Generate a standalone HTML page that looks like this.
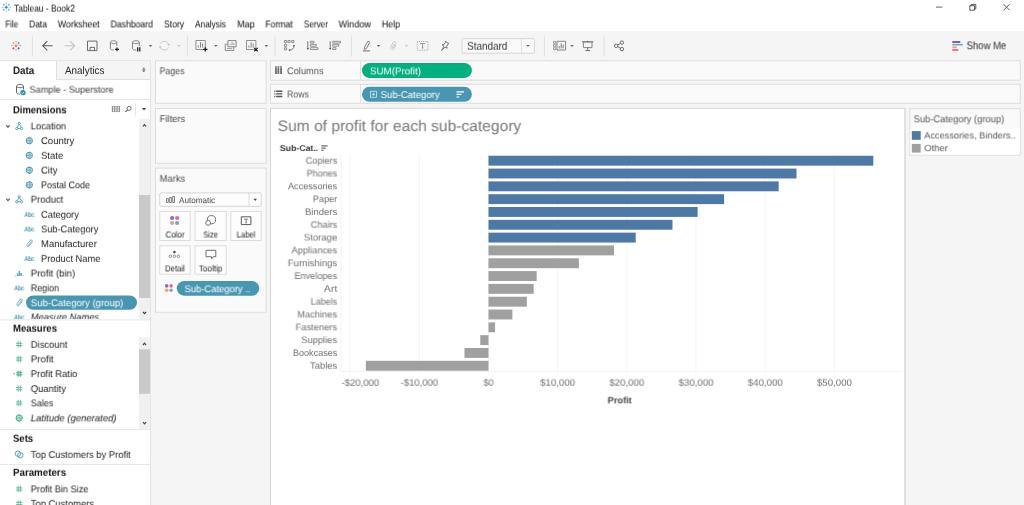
<!DOCTYPE html>
<html lang="en">
<head>
<meta charset="utf-8">
<title>Tableau - Book2</title>
<style>
html,body{margin:0;padding:0;}
body{width:1024px;height:505px;overflow:hidden;background:#fff;font-family:"Liberation Sans", sans-serif;position:relative;}
#app{position:absolute;left:0;top:0;width:1024px;height:505px;overflow:hidden;background:#fff;}
#shapes{position:absolute;left:0;top:0;display:block;}
#text{position:absolute;left:0;top:0;width:1024px;height:505px;overflow:hidden;}
.r{position:absolute;box-sizing:border-box;display:block;}
.t{position:absolute;white-space:nowrap;display:block;text-rendering:geometricPrecision;}
</style>
</head>
<body>
<div id="app">
<svg id="shapes" width="1024" height="505" viewBox="0 0 1024 505">
<rect x="0" y="0" width="1024" height="31" fill="#fff"/>
<g transform="translate(6.3 7.3)"><path d="M0 -2.18L0.7 -0.7L2.18 0L0.7 0.7L0 2.18L-0.7 0.7L-2.18 0L-0.7 -0.7Z" fill="#3f86c9" opacity="1"/><path d="M-2.47 -3.99L-1.98 -2.96L-0.95 -2.47L-1.98 -1.98L-2.47 -0.95L-2.96 -1.98L-3.99 -2.47L-2.96 -2.96Z" fill="#7db3e2" opacity="1"/><path d="M2.47 -3.99L2.96 -2.96L3.99 -2.47L2.96 -1.98L2.47 -0.95L1.98 -1.98L0.95 -2.47L1.98 -2.96Z" fill="#7db3e2" opacity="1"/><path d="M-2.47 0.95L-1.98 1.98L-0.95 2.47L-1.98 2.96L-2.47 3.99L-2.96 2.96L-3.99 2.47L-2.96 1.98Z" fill="#7db3e2" opacity="1"/><path d="M2.47 0.95L2.96 1.98L3.99 2.47L2.96 2.96L2.47 3.99L1.98 2.96L0.95 2.47L1.98 1.98Z" fill="#7db3e2" opacity="1"/><path d="M0 -5.04L0.35 -4.29L1.09 -3.94L0.35 -3.59L0 -2.85L-0.35 -3.59L-1.09 -3.94L-0.35 -4.29Z" fill="#8fc0ea" opacity="1"/><path d="M0 2.85L0.35 3.59L1.09 3.94L0.35 4.29L0 5.04L-0.35 4.29L-1.09 3.94L-0.35 3.59Z" fill="#8fc0ea" opacity="1"/><path d="M-3.94 -1.09L-3.59 -0.35L-2.85 0L-3.59 0.35L-3.94 1.09L-4.29 0.35L-5.04 0L-4.29 -0.35Z" fill="#8fc0ea" opacity="1"/><path d="M3.94 -1.09L4.29 -0.35L5.04 0L4.29 0.35L3.94 1.09L3.59 0.35L2.85 0L3.59 -0.35Z" fill="#8fc0ea" opacity="1"/></g>
<g transform="translate(936 4)"><path d="M0 3.1h6.4" stroke="#555" stroke-width=".9" fill="none"/></g>
<g transform="translate(969.3 4)"><path d="M0.5 1.7h4.7v4.5h-4.7zM1.8 1.7v-1.3h4.7v4.4h-1.3" stroke="#444" stroke-width=".9" fill="none"/></g>
<g transform="translate(1003.2 3.8)"><path d="M0.3 0.3l6.2 6.2M6.5 0.3l-6.2 6.2" stroke="#444" stroke-width=".85" fill="none"/></g>
<rect x="0" y="31" width="1024" height="30" fill="#f5f5f5"/>
<rect x="31.9" y="35.4" width="1" height="21.2" fill="#e0e0e0"/>
<rect x="186.9" y="35.4" width="1" height="21.2" fill="#e0e0e0"/>
<rect x="274.4" y="35.4" width="1" height="21.2" fill="#e0e0e0"/>
<rect x="350.9" y="35.4" width="1" height="21.2" fill="#e0e0e0"/>
<rect x="543.9" y="35.4" width="1" height="21.2" fill="#e0e0e0"/>
<rect x="603.6" y="35.4" width="1" height="21.2" fill="#e0e0e0"/>
<g transform="translate(16 45.7)"><path d="M0 -2.3L0.74 -0.74L2.3 0L0.74 0.74L0 2.3L-0.74 0.74L-2.3 0L-0.74 -0.74Z" fill="#f08d3c" opacity="1"/><path d="M-2.6 -4.2L-2.09 -3.11L-1 -2.6L-2.09 -2.09L-2.6 -1L-3.11 -2.09L-4.2 -2.6L-3.11 -3.11Z" fill="#f3a64a" opacity="1"/><path d="M2.6 -4.2L3.11 -3.11L4.2 -2.6L3.11 -2.09L2.6 -1L2.09 -2.09L1 -2.6L2.09 -3.11Z" fill="#5a9aa9" opacity="1"/><path d="M-2.6 1L-2.09 2.09L-1 2.6L-2.09 3.11L-2.6 4.2L-3.11 3.11L-4.2 2.6L-3.11 2.09Z" fill="#d8465d" opacity="1"/><path d="M2.6 1L3.11 2.09L4.2 2.6L3.11 3.11L2.6 4.2L2.09 3.11L1 2.6L2.09 2.09Z" fill="#3d6fb1" opacity="1"/><path d="M0 -5.3L0.37 -4.52L1.15 -4.15L0.37 -3.78L0 -3L-0.37 -3.78L-1.15 -4.15L-0.37 -4.52Z" fill="#86b3b8" opacity="1"/><path d="M0 3L0.37 3.78L1.15 4.15L0.37 4.52L0 5.3L-0.37 4.52L-1.15 4.15L-0.37 3.78Z" fill="#a0a6cf" opacity="1"/><path d="M-4.15 -1.15L-3.78 -0.37L-3 0L-3.78 0.37L-4.15 1.15L-4.52 0.37L-5.3 0L-4.52 -0.37Z" fill="#90b7be" opacity="1"/><path d="M4.15 -1.15L4.52 -0.37L5.3 0L4.52 0.37L4.15 1.15L3.78 0.37L3 0L3.78 -0.37Z" fill="#8c86be" opacity="1"/></g>
<g transform="translate(42 40.8)"><path d="M0.8 5h9.8M5.3 0.4L0.7 5l4.6 4.6" stroke="#5c5c5c" stroke-width="1.05" fill="none"/></g>
<g transform="translate(64.4 40.8)"><path d="M0.3 5h9.8M5.7 0.4L10.3 5 5.7 9.6" stroke="#c2c2c2" stroke-width="1.05" fill="none"/></g>
<g transform="translate(87 40.6)"><path d="M0.5 0.5h9.5v9.5h-9.5zM3 10v-3.2h4.5V10" stroke="#6b6b6b" stroke-width="1" fill="none"/></g>
<g transform="translate(109.9 40.2)"><path d="M0.5 2c0-2 6.4-2 6.4 0v3.6M0.5 2v6.2c0 1 1.6 1.6 3.4 1.6M0.5 2c0 1.9 6.4 1.9 6.4 0" stroke="#7a7a7a" stroke-width=".9" fill="none"/><path d="M7.1 7.2v3.9M5.15 9.15h3.9" stroke="#222" stroke-width="1.2" fill="none"/></g>
<g transform="translate(132 40.2)"><path d="M0.5 2c0-2 6.8-2 6.8 0v4M0.5 2v6.2c0 1 1.6 1.7 3.8 1.7M0.5 2c0 1.9 6.8 1.9 6.8 0" stroke="#7a7a7a" stroke-width=".9" fill="none"/><path d="M5.7 7v4.4M7.8 7v4.4" stroke="#1c1c1c" stroke-width="1.25" fill="none"/></g>
<g transform="translate(148.75 44.9)"><path d="M0 0h3.5l-1.75 2.1z" fill="#666"/></g>
<g transform="translate(159 40.5)"><path d="M9.9 4.2A4.7 4.7 0 0 0 1.2 3.3M0.9 6.2A4.7 4.7 0 0 0 9.6 7.1" stroke="#c6c6c6" stroke-width=".9" fill="none"/><path d="M10.6 3l-0.4 2.2-2-1zM0.2 7.4l0.4-2.2 2 1z" fill="#c0c0c0"/></g>
<g transform="translate(177.05 44.9)"><path d="M0 0h3.5l-1.75 2.1z" fill="#c8c8c8"/></g>
<g transform="translate(195.4 40)"><path d="M0.5 0.5h9.4v9h-9.4z" stroke="#8a8a8a" stroke-width=".95" fill="none" stroke-linejoin="round"/><path d="M2.9 7.6v-2.1M5.1 7.6v-5.4M7.2 7.6v-4.1" stroke="#7a7a7a" stroke-width=".9" fill="none"/><path d="M9.9 7.3v4.3M7.75 9.45h4.3" stroke="#1c1c1c" stroke-width="1.25" fill="none"/></g>
<g transform="translate(214.15 44.9)"><path d="M0 0h3.5l-1.75 2.1z" fill="#666"/></g>
<g transform="translate(224.6 40)"><path d="M0.6 4.2h2.3M0.6 4.2v6.3h8.6v-3.6" stroke="#8a8a8a" stroke-width=".95" fill="none"/><path d="M3.3 0.6h8.2v6.2h-8.2z" stroke="#7e7e7e" stroke-width=".95" fill="none"/><path d="M5.6 5.2v-1.4M7.4 5.2v-3.2M9.2 5.2v-2.3M2.2 8.6h5.4" stroke="#8a8a8a" stroke-width=".8" fill="none"/></g>
<g transform="translate(246 40)"><path d="M0.5 0.5h9.4v9h-9.4z" stroke="#8a8a8a" stroke-width=".95" fill="none" stroke-linejoin="round"/><path d="M2.9 7.6v-2.1M5.1 7.6v-5.4M7.2 7.6v-4.1" stroke="#7a7a7a" stroke-width=".9" fill="none"/><path d="M8.3 7.9l3.4 3.4M11.7 7.9l-3.4 3.4" stroke="#1c1c1c" stroke-width="1.25" fill="none"/></g>
<g transform="translate(264.65 44.9)"><path d="M0 0h3.5l-1.75 2.1z" fill="#666"/></g>
<g transform="translate(284 40)"><path d="M0.4 0.5h2.2v2.1h-2.2zM3.9 0.5h2.2v2.1h-2.2zM7.7 0.5h2.2v2.1h-2.2zM0.4 4.3h2.2v2.1h-2.2zM0.4 7.8h2.2v2.1h-2.2z" stroke="#7a7a7a" stroke-width=".8" fill="none"/><path d="M10 5.7C10 8.4 8.2 9.9 5.6 10.1" stroke="#6a6a6a" stroke-width=".9" fill="none"/><circle cx="10" cy="5.6" r=".85" fill="#5a5a5a"/><circle cx="5.5" cy="10.1" r=".85" fill="#5a5a5a"/></g>
<g transform="translate(306.5 40.5)"><path d="M1.3 0.7v8" stroke="#6a6a6a" stroke-width=".9" fill="none"/><path d="M0.1 7.5h2.4l-1.2 1.7z" fill="#555"/><path d="M3.9 0.8h3.5v1.7h-3.5zM3.9 3.8h5.8v1.9h-5.8zM3.9 7.2h7.6v1.8h-7.6z" stroke="#7a7a7a" stroke-width=".8" fill="none"/></g>
<g transform="translate(329 40.5)"><path d="M1.2 0.7v8" stroke="#6a6a6a" stroke-width=".9" fill="none"/><path d="M0 7.5h2.4l-1.2 1.7z" fill="#555"/><path d="M3.7 0.8h7.8v1.7h-7.8zM3.7 3.8h6.1v1.9h-6.1zM3.7 7.2h3.2v1.8h-3.2z" stroke="#7a7a7a" stroke-width=".8" fill="none"/></g>
<g transform="translate(362 40.5)"><path d="M6 0.6l1.8 1-3.5 6.6-2 0.6 0.2-2.1z" stroke="#727272" stroke-width=".9" fill="none" stroke-linejoin="round"/><path d="M0.8 10.4h7.2" stroke="#777" stroke-width="1.1" fill="none"/></g>
<g transform="translate(376.85 44.9)"><path d="M0 0h3.5l-1.75 2.1z" fill="#666"/></g>
<g transform="translate(389.6 40.6)"><g transform="rotate(27 4 5)"><path d="M5.9 3V7.6a1.9 1.9 0 0 1-3.8 0V2a1.35 1.35 0 0 1 2.7 0V7.2a0.55 0.55 0 0 1-1.1 0V3" stroke="#c6c6c6" stroke-width=".8" fill="none"/></g></g>
<g transform="translate(404.75 44.9)"><path d="M0 0h3.5l-1.75 2.1z" fill="#c8c8c8"/></g>
<g transform="translate(416.8 41)"><path d="M0.5 0.5h10.6v8.7h-10.6z" stroke="#9a9a9a" stroke-width=".9" stroke-dasharray=".9 .95" fill="none"/><path d="M3.6 2.5h4.4M5.8 2.5v4.5M4.9 7h1.8M3.6 2.5v.8M8 2.5v.8" stroke="#777" stroke-width=".7" fill="none"/></g>
<g transform="translate(440.6 40.5)"><path d="M4.6 0.7l3.7 2.5-1.2 0.5-1.1 2.6 0.6 1.4-2.1-1.1-3.5 3.5 2.3-4.3-1.8-1.4 1.7-0.2 1.8-2.3z" stroke="#666" stroke-width=".9" fill="none" stroke-linejoin="round"/></g>
<rect x="462.1" y="38.6" width="72.2" height="14.6" stroke="#d6d6d6" stroke-width="1" fill="#fafafa" rx="1"/>
<rect x="521.1" y="39" width="1" height="14" fill="#e0e0e0"/>
<g transform="translate(526.25 44.9)"><path d="M0 0h3.5l-1.75 2.1z" fill="#666"/></g>
<g transform="translate(553 40.8)"><path d="M0.5 0.6h2.3v1.9h-2.3zM0.5 3.7h2.3v1.9h-2.3zM0.5 6.9h2.3v1.9h-2.3z" stroke="#808080" stroke-width=".75" fill="none"/><path d="M4 0.5h8.6v8.7h-8.6z" stroke="#7a7a7a" stroke-width=".9" fill="none"/><path d="M6.2 7.6v-2.2M8.2 7.6v-5M10.2 7.6v-3.6" stroke="#6a6a6a" stroke-width=".9" fill="none"/></g>
<g transform="translate(570.25 44.9)"><path d="M0 0h3.5l-1.75 2.1z" fill="#666"/></g>
<g transform="translate(582 40.5)"><path d="M0.1 1.4h11.2" stroke="#555" stroke-width="1.1" fill="none"/><path d="M5.7 0.3v1" stroke="#555" stroke-width="1" fill="none"/><path d="M1.4 1.8v5.3h8.6v-5.3" stroke="#7a7a7a" stroke-width=".9" fill="none"/><path d="M5.7 7.1v2.9M3.4 10h4.6" stroke="#6a6a6a" stroke-width=".9" fill="none"/></g>
<g transform="translate(614 40.5)"><circle cx="7.9" cy="2.1" r="1.7" stroke="#606060" stroke-width=".9" fill="none"/><circle cx="2.2" cy="5.3" r="1.7" stroke="#606060" stroke-width=".9" fill="none"/><circle cx="7.9" cy="8.6" r="1.7" stroke="#606060" stroke-width=".9" fill="none"/><path d="M3.7 4.5l2.7-1.5M3.7 6.2l2.7 1.5" stroke="#606060" stroke-width=".9" fill="none"/></g>
<g transform="translate(952.3 41)"><path d="M0 1h8" stroke="#7b66a3" stroke-width="2"/><path d="M0 3.7h10.5" stroke="#6ea5d2" stroke-width="1.6"/><path d="M0 6.3h4.5" stroke="#f2a35e" stroke-width="1.8"/><path d="M0 9h6" stroke="#e8667e" stroke-width="1.8"/></g>
<rect x="150" y="61" width="874" height="444" fill="#f5f5f5"/>
<rect x="0" y="61" width="150" height="444" fill="#fff"/>
<rect x="0" y="60.2" width="150.5" height="1" fill="#e4e4e4"/>
<rect x="150" y="60.2" width="0.9" height="445" fill="#e2e2e2"/>
<rect x="56" y="61" width="94" height="19" fill="#f5f5f5"/>
<rect x="56" y="61" width="1" height="19" fill="#e0e0e0"/>
<rect x="56" y="79" width="94" height="1" fill="#e0e0e0"/>
<g transform="translate(142.1 67.6)"><path d="M1.7 0l1.7 1.9h-3.4zM1.7 4.6l1.7-1.9h-3.4z" fill="#666"/></g>
<g transform="translate(16 84)"><path d="M0.5 2.2c0-2.2 7-2.2 7 0v3.3M0.5 2.2v6.3c0 1 1.5 1.6 3.2 1.6M0.5 2.2c0 2 7 2 7 0" stroke="#666" stroke-width="1" fill="none"/><circle cx="7" cy="8.6" r="2.7" fill="#2e89b8"/><path d="M5.7 8.6l1 1 1.6-1.9" stroke="#fff" stroke-width=".8" fill="none"/></g>
<rect x="0" y="99" width="150" height="1" fill="#e6e6e6"/>
<g transform="translate(111.9 106)"><path d="M0.5 0v6M2.8 0v6M5.2 0v6M7.5 0v6" stroke="#7d7d7d" stroke-width=".9" fill="none"/><path d="M0 0.5h8M0 2.2h8M0 3.9h8M0 5.6h8" stroke="#8c8c8c" stroke-width=".6" fill="none"/></g>
<g transform="translate(125 105.8)"><circle cx="4.1" cy="2.6" r="2" stroke="#5c5c5c" stroke-width=".9" fill="none"/><path d="M2.6 4.1L0.4 6.1" stroke="#555" stroke-width="1.1" fill="none"/></g>
<rect x="135.2" y="103.2" width="0.8" height="12.3" fill="#dedede"/>
<g transform="translate(141.9 108.1)"><path d="M0 0h4.2l-2.1 2.5z" fill="#4a4a4a"/></g>
<g transform="translate(5.9 125.1)"><path d="M0.3 0.3l1.75 1.85 1.75-1.85" stroke="#5a5a5a" stroke-width="1.15" fill="none"/></g>
<g transform="translate(15.3 122.1)"><g stroke="#4c97b4" stroke-width=".85" fill="none"><rect x="2.8" y="0.4" width="2.2" height="1.9" rx=".5"/><circle cx="1.5" cy="6.4" r="1.15"/><circle cx="6.3" cy="6.4" r="1.15"/><path d="M3.5 2.4L1.9 5.3M4.3 2.4L5.9 5.3M2.7 6.4h2.4"/></g></g>
<g transform="translate(25.6 137)"><g stroke="#4c97b4" fill="none"><circle cx="3.7" cy="3.7" r="3.15" stroke-width="1"/><path d="M0.5 3.7h6.4M3.7 0.5v6.4" stroke-width=".7"/><ellipse cx="3.7" cy="3.7" rx="1.6" ry="3.1" stroke-width=".6"/></g></g>
<g transform="translate(25.6 151.7)"><g stroke="#4c97b4" fill="none"><circle cx="3.7" cy="3.7" r="3.15" stroke-width="1"/><path d="M0.5 3.7h6.4M3.7 0.5v6.4" stroke-width=".7"/><ellipse cx="3.7" cy="3.7" rx="1.6" ry="3.1" stroke-width=".6"/></g></g>
<g transform="translate(25.6 166.5)"><g stroke="#4c97b4" fill="none"><circle cx="3.7" cy="3.7" r="3.15" stroke-width="1"/><path d="M0.5 3.7h6.4M3.7 0.5v6.4" stroke-width=".7"/><ellipse cx="3.7" cy="3.7" rx="1.6" ry="3.1" stroke-width=".6"/></g></g>
<g transform="translate(25.6 181.2)"><g stroke="#4c97b4" fill="none"><circle cx="3.7" cy="3.7" r="3.15" stroke-width="1"/><path d="M0.5 3.7h6.4M3.7 0.5v6.4" stroke-width=".7"/><ellipse cx="3.7" cy="3.7" rx="1.6" ry="3.1" stroke-width=".6"/></g></g>
<g transform="translate(5.9 198.4)"><path d="M0.3 0.3l1.75 1.85 1.75-1.85" stroke="#5a5a5a" stroke-width="1.15" fill="none"/></g>
<g transform="translate(15.3 195.4)"><g stroke="#4c97b4" stroke-width=".85" fill="none"><rect x="2.8" y="0.4" width="2.2" height="1.9" rx=".5"/><circle cx="1.5" cy="6.4" r="1.15"/><circle cx="6.3" cy="6.4" r="1.15"/><path d="M3.5 2.4L1.9 5.3M4.3 2.4L5.9 5.3M2.7 6.4h2.4"/></g></g>
<g transform="translate(26.1 239.8)"><path d="M1.6 6.6l3.4-4.6c0.7-1-0.7-1.9-1.4-0.9L0.9 4.9c-1 1.5 1.2 2.9 2.2 1.5l3-4.3c1-1.5-1.3-3-2.4-1.5" stroke="#5aa3c0" stroke-width=".75" fill="none" stroke-linecap="round"/></g>
<g transform="translate(14.6 269.9)"><path d="M2.9 6.2v-2.6M4.75 6.2v-5M6.55 6.2v-3.2" stroke="#5a9fbb" stroke-width="1.45" fill="none"/><path d="M0.1 5.9h1.4M7.9 5.9h1.4" stroke="#7bb4ca" stroke-width=".7" fill="none"/></g>
<g transform="translate(16 298.9)"><path d="M1.6 6.6l3.4-4.6c0.7-1-0.7-1.9-1.4-0.9L0.9 4.9c-1 1.5 1.2 2.9 2.2 1.5l3-4.3c1-1.5-1.3-3-2.4-1.5" stroke="#5aa3c0" stroke-width=".75" fill="none" stroke-linecap="round"/></g>
<rect x="26" y="295.4" width="111" height="14.4" fill="#4996b2" rx="7.2"/>
<rect x="139" y="118.8" width="11" height="200.6" fill="#f0f0f0"/>
<rect x="139" y="195" width="11" height="103" fill="#c9c9c9"/>
<g transform="translate(142.7 124.1)"><path d="M0.2 2.4l1.6-1.9 1.6 1.9" stroke="#3c3c3c" stroke-width="1.1" fill="none"/></g>
<g transform="translate(142.7 311.4)"><path d="M0.2 0.4l1.6 1.9 1.6-1.9" stroke="#3c3c3c" stroke-width="1.1" fill="none"/></g>
<rect x="0" y="319.4" width="150" height="1" fill="#e6e6e6"/>
<g transform="translate(16 341.2)"><path d="M2.1 0v6.4M4.3 0v6.4M0 2.1h6.4M0 4.3h6.4" stroke="#47b08d" stroke-width=".78" fill="none"/></g>
<g transform="translate(16 355.8)"><path d="M2.1 0v6.4M4.3 0v6.4M0 2.1h6.4M0 4.3h6.4" stroke="#47b08d" stroke-width=".78" fill="none"/></g>
<g transform="translate(13.2 370.5)"><path d="M0.2 3.2h1.6" stroke="#47b08d" stroke-width="1.1" fill="none"/><path d="M4.9 0v6.4M7.1 0v6.4M2.8 2.1h6.4M2.8 4.3h6.4" stroke="#47b08d" stroke-width=".85" fill="none"/><path d="M3.6 0.8h4.8v4.8h-4.8z" fill="#47b08d" opacity=".35"/></g>
<g transform="translate(16 385.4)"><path d="M2.1 0v6.4M4.3 0v6.4M0 2.1h6.4M0 4.3h6.4" stroke="#47b08d" stroke-width=".78" fill="none"/></g>
<g transform="translate(16 399.8)"><path d="M2.1 0v6.4M4.3 0v6.4M0 2.1h6.4M0 4.3h6.4" stroke="#47b08d" stroke-width=".78" fill="none"/></g>
<g transform="translate(15.5 414.3)"><g stroke="#47b08d" fill="none"><circle cx="3.7" cy="3.7" r="3.15" stroke-width="1"/><path d="M0.5 3.7h6.4M3.7 0.5v6.4" stroke-width=".7"/><ellipse cx="3.7" cy="3.7" rx="1.6" ry="3.1" stroke-width=".6"/></g></g>
<rect x="139" y="337.4" width="11" height="91.6" fill="#f0f0f0"/>
<rect x="139" y="349.3" width="11" height="44.5" fill="#c9c9c9"/>
<g transform="translate(142.7 342.7)"><path d="M0.2 2.4l1.6-1.9 1.6 1.9" stroke="#3c3c3c" stroke-width="1.1" fill="none"/></g>
<g transform="translate(142.7 421.6)"><path d="M0.2 0.4l1.6 1.9 1.6-1.9" stroke="#3c3c3c" stroke-width="1.1" fill="none"/></g>
<rect x="0" y="429.2" width="150" height="1" fill="#e6e6e6"/>
<g transform="translate(14.7 450.5)"><g stroke="#4c97b4" stroke-width=".9" fill="none"><circle cx="3.2" cy="3.2" r="2.7"/><circle cx="5.6" cy="4.8" r="2.7"/></g></g>
<rect x="0" y="463.9" width="150" height="1" fill="#e6e6e6"/>
<g transform="translate(16 485.8)"><path d="M2.1 0v6.4M4.3 0v6.4M0 2.1h6.4M0 4.3h6.4" stroke="#47b08d" stroke-width=".78" fill="none"/></g>
<g transform="translate(16 500.3)"><path d="M2.1 0v6.4M4.3 0v6.4M0 2.1h6.4M0 4.3h6.4" stroke="#47b08d" stroke-width=".78" fill="none"/></g>
<rect x="155.5" y="60.8" width="110.6" height="42.5" stroke="#dcdcdc" stroke-width="1" fill="#fafafa"/>
<rect x="155.5" y="108.5" width="110.6" height="54.7" stroke="#dcdcdc" stroke-width="1" fill="#fafafa"/>
<rect x="155.5" y="168.1" width="110.6" height="144.2" stroke="#dcdcdc" stroke-width="1" fill="#fafafa"/>
<rect x="159.8" y="192.9" width="101.4" height="13.4" stroke="#d5d5d5" stroke-width="1" fill="#fcfcfc" rx="1"/>
<rect x="248.5" y="193" width="1" height="13.4" fill="#dcdcdc"/>
<g transform="translate(166 196)"><path d="M0.5 2.5h1.8v4h-1.8zM3.6 1.5h1.8v5h-1.8zM6.7 0.5h1.8v6h-1.8z" stroke="#666" stroke-width=".8" fill="none"/></g>
<g transform="translate(253.45 198.8)"><path d="M0 0h3.5l-1.75 2.1z" fill="#444"/></g>
<rect x="159.8" y="211.5" width="30.4" height="29" stroke="#dcdcdc" stroke-width="1" fill="#fdfdfd"/>
<rect x="195" y="211.5" width="31.2" height="29" stroke="#dcdcdc" stroke-width="1" fill="#fdfdfd"/>
<rect x="230.8" y="211.5" width="30.4" height="29" stroke="#dcdcdc" stroke-width="1" fill="#fdfdfd"/>
<rect x="159.8" y="245.8" width="30.4" height="28.4" stroke="#dcdcdc" stroke-width="1" fill="#fdfdfd"/>
<rect x="195" y="245.8" width="31.2" height="28.4" stroke="#dcdcdc" stroke-width="1" fill="#fdfdfd"/>
<g transform="translate(169.6 215.5)"><circle cx="2.5" cy="2.5" r="2.1" fill="#8870ab"/><circle cx="7.5" cy="2.5" r="2.1" fill="#ec6c84"/><circle cx="2.5" cy="7.5" r="2.1" fill="#f3a366"/><circle cx="7.5" cy="7.5" r="2.1" fill="#78a8d6"/></g>
<g transform="translate(205 215)"><circle cx="6.5" cy="4.7" r="4.1" stroke="#606060" stroke-width=".9" fill="none"/><circle cx="3.1" cy="7.9" r="2.4" stroke="#606060" stroke-width=".9" fill="#fdfdfd"/></g>
<g transform="translate(240.8 216.3)"><path d="M0.5 0.5h9.6v7.8h-9.6z" stroke="#5a5a5a" stroke-width="1" fill="none"/><path d="M3.2 2.9h4.2M5.3 2.9v3.6M4.5 6.5h1.6" stroke="#666" stroke-width=".8" fill="none"/></g>
<g transform="translate(168.4 250.6)"><circle cx="6" cy="1.5" r="1.3" fill="#4a4a4a"/><circle cx="2" cy="5.7" r="1.25" stroke="#666" stroke-width=".7" fill="none"/><circle cx="6" cy="5.7" r="1.25" stroke="#666" stroke-width=".7" fill="none"/><circle cx="10" cy="5.7" r="1.25" stroke="#666" stroke-width=".7" fill="none"/></g>
<g transform="translate(205.5 249.8)"><path d="M0.5 0.5h9.8v6.4h-2.6l-1.4 2-0.4-2h-5.4z" stroke="#606060" stroke-width=".9" fill="none" stroke-linejoin="round"/></g>
<g transform="translate(163.9 283.1)"><circle cx="2.8" cy="2.8" r="1.8" fill="#8870ab"/><circle cx="7.2" cy="2.8" r="1.8" fill="#ec6c84"/><circle cx="2.8" cy="7.2" r="1.8" fill="#f3a366"/><circle cx="7.2" cy="7.2" r="1.8" fill="#78a8d6"/></g>
<rect x="176.8" y="281" width="82.4" height="14.7" fill="#4996b2" rx="7.4"/>
<rect x="270.5" y="60.8" width="749.7" height="19.4" stroke="#dcdcdc" stroke-width="1" fill="#fafafa"/>
<rect x="360" y="61.3" width="1" height="18.4" fill="#e0e0e0"/>
<rect x="270.5" y="84.3" width="749.7" height="19" stroke="#dcdcdc" stroke-width="1" fill="#fafafa"/>
<rect x="360" y="84.8" width="1" height="18" fill="#e0e0e0"/>
<g transform="translate(275 66.2)"><path d="M0.95 0v7.8M3.35 0v7.8M6.05 0v7.8" stroke="#6e6e6e" stroke-width="1.8" fill="none"/><path d="M0 1.5h7.2" stroke="#fafafa" stroke-width=".5" opacity=".6" fill="none"/></g>
<g transform="translate(274.3 90.3)"><path d="M0 0.9h1.1M1.9 0.9h6.1M0 3.6h1.1M1.9 3.6h6.1M0 6.2h1.1M1.9 6.2h6.1" stroke="#555" stroke-width="1.35" fill="none"/></g>
<rect x="362" y="63.1" width="109.9" height="14.9" fill="#00b180" rx="7.4"/>
<rect x="362" y="86.7" width="109.9" height="15" fill="#4996b2" rx="7.5"/>
<g transform="translate(370 90.8)"><path d="M0.5 0.5h6v6h-6zM2 3.5h3M3.5 2v3" stroke="#fff" stroke-width=".75" fill="none" opacity=".85"/></g>
<g transform="translate(456.5 91)"><path d="M0 0.8h7.5M0 3.4h5M0 6h2.8" stroke="#fff" stroke-width="1.2" fill="none"/></g>
<rect x="270.5" y="108.3" width="634.3" height="399" stroke="#d6d6d6" stroke-width="1" fill="#fff"/>
<rect x="904.3" y="108.3" width="1.7" height="400" fill="#e1e1e1"/>
<g transform="translate(321.4 145.3)"><path d="M0 0.6h6.2M0 2.8h4.2M0 5h2.2" stroke="#444" stroke-width="1" fill="none"/></g>
<rect x="340.5" y="154" width="1" height="217.5" fill="#f4f4f4"/>
<rect x="340.5" y="371" width="559.2" height="1" fill="#f3f3f3"/>
<rect x="349.52" y="154" width="1" height="220.5" fill="#f4f4f4"/>
<rect x="418.71" y="154" width="1" height="220.5" fill="#f4f4f4"/>
<rect x="487.9" y="154" width="1" height="220.5" fill="#f4f4f4"/>
<rect x="557.09" y="154" width="1" height="220.5" fill="#f4f4f4"/>
<rect x="626.28" y="154" width="1" height="220.5" fill="#f4f4f4"/>
<rect x="695.47" y="154" width="1" height="220.5" fill="#f4f4f4"/>
<rect x="764.66" y="154" width="1" height="220.5" fill="#f4f4f4"/>
<rect x="833.85" y="154" width="1" height="220.5" fill="#f4f4f4"/>
<rect x="488.5" y="155.75" width="384.82" height="9.9" fill="#4e79a7"/>
<rect x="488.5" y="168.57" width="308.01" height="9.9" fill="#4e79a7"/>
<rect x="488.5" y="181.38" width="290.16" height="9.9" fill="#4e79a7"/>
<rect x="488.5" y="194.2" width="235.62" height="9.9" fill="#4e79a7"/>
<rect x="488.5" y="207.01" width="209.11" height="9.9" fill="#4e79a7"/>
<rect x="488.5" y="219.83" width="183.98" height="9.9" fill="#4e79a7"/>
<rect x="488.5" y="232.65" width="147.23" height="9.9" fill="#4e79a7"/>
<rect x="488.5" y="245.46" width="125.5" height="9.9" fill="#a0a0a0"/>
<rect x="488.5" y="258.28" width="90.36" height="9.9" fill="#a0a0a0"/>
<rect x="488.5" y="271.09" width="48.18" height="9.9" fill="#a0a0a0"/>
<rect x="488.5" y="283.91" width="45.17" height="9.9" fill="#a0a0a0"/>
<rect x="488.5" y="296.73" width="38.37" height="9.9" fill="#a0a0a0"/>
<rect x="488.5" y="309.54" width="23.87" height="9.9" fill="#a0a0a0"/>
<rect x="488.5" y="322.36" width="6.57" height="9.9" fill="#a0a0a0"/>
<rect x="480.27" y="335.17" width="8.23" height="9.9" fill="#a0a0a0"/>
<rect x="464.47" y="347.99" width="24.03" height="9.9" fill="#a0a0a0"/>
<rect x="365.86" y="360.81" width="122.64" height="9.9" fill="#a0a0a0"/>
<rect x="909.9" y="108.7" width="110.3" height="46.4" stroke="#dcdcdc" stroke-width="1" fill="#fafafa"/>
<rect x="910.4" y="128.6" width="109.3" height="26" fill="#fff"/>
<rect x="911.8" y="131.1" width="8.9" height="8.7" fill="#4e79a7"/>
<rect x="911.8" y="143.9" width="8.9" height="8.7" fill="#a0a0a0"/>
</svg>
<div id="text">
<span class="t" style="left:14px;top:2px;font-size:9.9px;line-height:14px;color:#111;transform-origin:0 50%;transform:perspective(10000px) translate3d(0px,0.61px,0.01px) scaleX(0.8526);">Tableau - Book2</span>
<span class="t" style="left:5px;top:18px;font-size:9.9px;line-height:14px;color:#080808;transform-origin:0 50%;transform:perspective(10000px) translate3d(0.3px,0.41px,0.01px) scaleX(0.8087);">File</span>
<span class="t" style="left:29px;top:18px;font-size:9.9px;line-height:14px;color:#080808;transform-origin:0 50%;transform:perspective(10000px) translate3d(0.1px,0.41px,0.01px) scaleX(0.8608);">Data</span>
<span class="t" style="left:57px;top:18px;font-size:9.9px;line-height:14px;color:#080808;transform-origin:0 50%;transform:perspective(10000px) translate3d(0.8px,0.41px,0.01px) scaleX(0.8868);">Worksheet</span>
<span class="t" style="left:110px;top:18px;font-size:9.9px;line-height:14px;color:#080808;transform-origin:0 50%;transform:perspective(10000px) translate3d(0.5px,0.41px,0.01px) scaleX(0.8776);">Dashboard</span>
<span class="t" style="left:164px;top:18px;font-size:9.9px;line-height:14px;color:#080808;transform-origin:0 50%;transform:perspective(10000px) translate3d(0px,0.41px,0.01px) scaleX(0.8742);">Story</span>
<span class="t" style="left:195px;top:18px;font-size:9.9px;line-height:14px;color:#080808;transform-origin:0 50%;transform:perspective(10000px) translate3d(0px,0.41px,0.01px) scaleX(0.8409);">Analysis</span>
<span class="t" style="left:237px;top:18px;font-size:9.9px;line-height:14px;color:#080808;transform-origin:0 50%;transform:perspective(10000px) translate3d(0.2px,0.41px,0.01px) scaleX(0.9088);">Map</span>
<span class="t" style="left:265px;top:18px;font-size:9.9px;line-height:14px;color:#080808;transform-origin:0 50%;transform:perspective(10000px) translate3d(0.3px,0.41px,0.01px) scaleX(0.8804);">Format</span>
<span class="t" style="left:303px;top:18px;font-size:9.9px;line-height:14px;color:#080808;transform-origin:0 50%;transform:perspective(10000px) translate3d(0.8px,0.41px,0.01px) scaleX(0.8300);">Server</span>
<span class="t" style="left:338px;top:18px;font-size:9.9px;line-height:14px;color:#080808;transform-origin:0 50%;transform:perspective(10000px) translate3d(0.6px,0.41px,0.01px) scaleX(0.9202);">Window</span>
<span class="t" style="left:381px;top:18px;font-size:9.9px;line-height:14px;color:#080808;transform-origin:0 50%;transform:perspective(10000px) translate3d(0.8px,0.41px,0.01px) scaleX(0.8939);">Help</span>
<span class="t" style="left:467px;top:38px;font-size:11.19px;line-height:16px;color:#333;transform-origin:0 50%;transform:perspective(10000px) translate3d(0px,0.75px,0.01px) scaleX(0.8896);">Standard</span>
<span class="t" style="left:966px;top:39px;font-size:11.04px;line-height:15px;color:#2a2a2a;transform-origin:0 50%;transform:perspective(10000px) translate3d(0.6px,0.2px,0.01px) scaleX(0.8605);">Show Me</span>
<span class="t" style="left:13px;top:64px;font-size:10.78px;line-height:15px;color:#1a1a1a;font-weight:bold;transform-origin:0 50%;transform:perspective(10000px) translate3d(0px,0.01px,0.01px) scaleX(0.9117);">Data</span>
<span class="t" style="left:65px;top:63px;font-size:10.56px;line-height:15px;color:#1c1c1c;transform-origin:0 50%;transform:perspective(10000px) translate3d(0px,0.93px,0.01px) scaleX(0.9348);">Analytics</span>
<span class="t" style="left:29px;top:83px;font-size:9.48px;line-height:13px;color:#3a3a3a;transform-origin:0 50%;transform:perspective(10000px) translate3d(0.5px,0.66px,0.01px) scaleX(0.9685);">Sample - Superstore</span>
<span class="t" style="left:13px;top:103px;font-size:10.37px;line-height:15px;color:#111;font-weight:bold;transform-origin:0 50%;transform:perspective(10000px) translate3d(0px,0.27px,0.01px) scaleX(0.9103);">Dimensions</span>
<span class="t" style="left:30px;top:120px;font-size:9.77px;line-height:14px;color:#1c1c1c;transform-origin:0 50%;transform:perspective(10000px) translate3d(0.7px,0.36px,0.01px) scaleX(0.9557);">Location</span>
<span class="t" style="left:41px;top:135px;font-size:9.77px;line-height:14px;color:#1c1c1c;transform-origin:0 50%;transform:perspective(10000px) translate3d(0px,0.06px,0.01px) scaleX(0.9735);">Country</span>
<span class="t" style="left:41px;top:149px;font-size:9.77px;line-height:14px;color:#1c1c1c;transform-origin:0 50%;transform:perspective(10000px) translate3d(0px,0.76px,0.01px) scaleX(0.9732);">State</span>
<span class="t" style="left:41px;top:164px;font-size:9.77px;line-height:14px;color:#1c1c1c;transform-origin:0 50%;transform:perspective(10000px) translate3d(0px,0.56px,0.01px) scaleX(0.9747);">City</span>
<span class="t" style="left:41px;top:179px;font-size:9.77px;line-height:14px;color:#1c1c1c;transform-origin:0 50%;transform:perspective(10000px) translate3d(0px,0.26px,0.01px) scaleX(0.9225);">Postal Code</span>
<span class="t" style="left:30px;top:193px;font-size:9.77px;line-height:14px;color:#1c1c1c;transform-origin:0 50%;transform:perspective(10000px) translate3d(0.7px,0.66px,0.01px) scaleX(0.9653);">Product</span>
<span class="t" style="left:22px;top:210px;font-size:6.96px;line-height:10px;color:#4695b4;font-weight:bold;transform-origin:50% 50%;transform:perspective(10000px) translate3d(0.83px,0.89px,0.01px) scaleX(0.7606);">Abc</span>
<span class="t" style="left:41px;top:208px;font-size:9.77px;line-height:14px;color:#1c1c1c;transform-origin:0 50%;transform:perspective(10000px) translate3d(0px,0.76px,0.01px) scaleX(0.9561);">Category</span>
<span class="t" style="left:22px;top:225px;font-size:6.96px;line-height:10px;color:#4695b4;font-weight:bold;transform-origin:50% 50%;transform:perspective(10000px) translate3d(0.83px,0.49px,0.01px) scaleX(0.7606);">Abc</span>
<span class="t" style="left:41px;top:223px;font-size:9.77px;line-height:14px;color:#1c1c1c;transform-origin:0 50%;transform:perspective(10000px) translate3d(0px,0.36px,0.01px) scaleX(0.9506);">Sub-Category</span>
<span class="t" style="left:41px;top:238px;font-size:9.77px;line-height:14px;color:#1c1c1c;transform-origin:0 50%;transform:perspective(10000px) translate3d(0px,0.06px,0.01px) scaleX(0.9695);">Manufacturer</span>
<span class="t" style="left:22px;top:254px;font-size:6.96px;line-height:10px;color:#4695b4;font-weight:bold;transform-origin:50% 50%;transform:perspective(10000px) translate3d(0.83px,0.99px,0.01px) scaleX(0.7606);">Abc</span>
<span class="t" style="left:41px;top:252px;font-size:9.77px;line-height:14px;color:#1c1c1c;transform-origin:0 50%;transform:perspective(10000px) translate3d(0px,0.86px,0.01px) scaleX(0.9513);">Product Name</span>
<span class="t" style="left:30px;top:267px;font-size:9.77px;line-height:14px;color:#1c1c1c;transform-origin:0 50%;transform:perspective(10000px) translate3d(0.7px,0.56px,0.01px) scaleX(0.9854);">Profit (bin)</span>
<span class="t" style="left:12px;top:284px;font-size:6.96px;line-height:10px;color:#4695b4;font-weight:bold;transform-origin:50% 50%;transform:perspective(10000px) translate3d(0.73px,0.39px,0.01px) scaleX(0.7606);">Abc</span>
<span class="t" style="left:30px;top:282px;font-size:9.77px;line-height:14px;color:#1c1c1c;transform-origin:0 50%;transform:perspective(10000px) translate3d(0.7px,0.26px,0.01px) scaleX(0.9109);">Region</span>
<span class="t" style="left:30px;top:297px;font-size:9.77px;line-height:14px;color:#fff;transform-origin:0 50%;transform:perspective(10000px) translate3d(0.7px,0.16px,0.01px) scaleX(0.9790);">Sub-Category (group)</span>
<div class="r" style="left:0;top:311px;width:139px;height:8.4px;overflow:hidden;">
<span class="t" style="left:12px;top:2px;font-size:6.96px;line-height:10px;color:#4695b4;font-weight:bold;transform-origin:50% 50%;transform:perspective(10000px) translate3d(0.73px,0.49px,0.01px) scaleX(0.7606);">Abc</span>
<span class="t" style="left:30px;top:0px;font-size:9.77px;line-height:14px;color:#1c1c1c;font-style:italic;transform-origin:0 50%;transform:perspective(10000px) translate3d(0.7px,0.36px,0.01px) scaleX(0.9519);">Measure Names</span>
</div>
<span class="t" style="left:13px;top:321px;font-size:10.37px;line-height:15px;color:#111;font-weight:bold;transform-origin:0 50%;transform:perspective(10000px) translate3d(0px,0.67px,0.01px) scaleX(0.9197);">Measures</span>
<span class="t" style="left:30px;top:338px;font-size:9.77px;line-height:14px;color:#1c1c1c;transform-origin:0 50%;transform:perspective(10000px) translate3d(0.7px,0.76px,0.01px) scaleX(0.9629);">Discount</span>
<span class="t" style="left:30px;top:353px;font-size:9.77px;line-height:14px;color:#1c1c1c;transform-origin:0 50%;transform:perspective(10000px) translate3d(0.7px,0.36px,0.01px) scaleX(0.9999);">Profit</span>
<span class="t" style="left:30px;top:368px;font-size:9.77px;line-height:14px;color:#1c1c1c;transform-origin:0 50%;transform:perspective(10000px) translate3d(0.7px,0.06px,0.01px) scaleX(0.9623);">Profit Ratio</span>
<span class="t" style="left:30px;top:382px;font-size:9.77px;line-height:14px;color:#1c1c1c;transform-origin:0 50%;transform:perspective(10000px) translate3d(0.7px,0.96px,0.01px) scaleX(0.9675);">Quantity</span>
<span class="t" style="left:30px;top:397px;font-size:9.77px;line-height:14px;color:#1c1c1c;transform-origin:0 50%;transform:perspective(10000px) translate3d(0.7px,0.36px,0.01px) scaleX(0.9166);">Sales</span>
<span class="t" style="left:30px;top:412px;font-size:9.77px;line-height:14px;color:#1c1c1c;font-style:italic;transform-origin:0 50%;transform:perspective(10000px) translate3d(0.7px,0.36px,0.01px) scaleX(0.9740);">Latitude (generated)</span>
<span class="t" style="left:13px;top:431px;font-size:10.37px;line-height:15px;color:#111;font-weight:bold;transform-origin:0 50%;transform:perspective(10000px) translate3d(0px,0.77px,0.01px) scaleX(0.9177);">Sets</span>
<span class="t" style="left:30px;top:448px;font-size:9.77px;line-height:14px;color:#1c1c1c;transform-origin:0 50%;transform:perspective(10000px) translate3d(0.7px,0.86px,0.01px) scaleX(0.9593);">Top Customers by Profit</span>
<span class="t" style="left:13px;top:465px;font-size:10.37px;line-height:15px;color:#111;font-weight:bold;transform-origin:0 50%;transform:perspective(10000px) translate3d(0px,0.77px,0.01px) scaleX(0.9399);">Parameters</span>
<span class="t" style="left:30px;top:483px;font-size:9.77px;line-height:14px;color:#1c1c1c;transform-origin:0 50%;transform:perspective(10000px) translate3d(0.7px,0.36px,0.01px) scaleX(0.9388);">Profit Bin Size</span>
<span class="t" style="left:30px;top:497px;font-size:9.77px;line-height:14px;color:#1c1c1c;transform-origin:0 50%;transform:perspective(10000px) translate3d(0.7px,0.86px,0.01px) scaleX(0.9635);">Top Customers</span>
<span class="t" style="left:159px;top:65px;font-size:9.72px;line-height:14px;color:#4a4a4a;transform-origin:0 50%;transform:perspective(10000px) translate3d(0.6px,0.24px,0.01px) scaleX(0.8999);">Pages</span>
<span class="t" style="left:159px;top:113px;font-size:9.72px;line-height:14px;color:#4a4a4a;transform-origin:0 50%;transform:perspective(10000px) translate3d(0.6px,0.04px,0.01px) scaleX(0.9638);">Filters</span>
<span class="t" style="left:159px;top:172px;font-size:9.72px;line-height:14px;color:#4a4a4a;transform-origin:0 50%;transform:perspective(10000px) translate3d(0.6px,0.74px,0.01px) scaleX(0.9638);">Marks</span>
<span class="t" style="left:179px;top:194px;font-size:8.4px;line-height:12px;color:#444;transform-origin:0 50%;transform:perspective(10000px) translate3d(0px,0.09px,0.01px) scaleX(0.9720);">Automatic</span>
<span class="t" style="left:164px;top:228px;font-size:8.86px;line-height:12px;color:#1e1e1e;transform-origin:50% 50%;transform:perspective(10000px) translate3d(0.41px,0.5px,0.01px) scaleX(0.8880);">Color</span>
<span class="t" style="left:201px;top:228px;font-size:8.86px;line-height:12px;color:#1e1e1e;transform-origin:50% 50%;transform:perspective(10000px) translate3d(0.98px,0.5px,0.01px) scaleX(0.8471);">Size</span>
<span class="t" style="left:235px;top:228px;font-size:8.86px;line-height:12px;color:#1e1e1e;transform-origin:50% 50%;transform:perspective(10000px) translate3d(0.16px,0.5px,0.01px) scaleX(0.8627);">Label</span>
<span class="t" style="left:163px;top:262px;font-size:8.86px;line-height:12px;color:#1e1e1e;transform-origin:50% 50%;transform:perspective(10000px) translate3d(0.67px,0.4px,0.01px) scaleX(0.8741);">Detail</span>
<span class="t" style="left:197px;top:262px;font-size:8.86px;line-height:12px;color:#1e1e1e;transform-origin:50% 50%;transform:perspective(10000px) translate3d(0.8px,0.4px,0.01px) scaleX(0.9215);">Tooltip</span>
<span class="t" style="left:184px;top:283px;font-size:9.86px;line-height:14px;color:#fff;transform-origin:0 50%;transform:perspective(10000px) translate3d(0.5px,0.19px,0.01px) scaleX(0.9558);">Sub-Category ..</span>
<span class="t" style="left:287px;top:65px;font-size:9.75px;line-height:14px;color:#565656;transform-origin:0 50%;transform:perspective(10000px) translate3d(0px,0.15px,0.01px) scaleX(0.9488);">Columns</span>
<span class="t" style="left:287px;top:88px;font-size:9.75px;line-height:14px;color:#565656;transform-origin:0 50%;transform:perspective(10000px) translate3d(0px,0.45px,0.01px) scaleX(0.9024);">Rows</span>
<span class="t" style="left:370px;top:65px;font-size:9.86px;line-height:14px;color:#fff;transform-origin:0 50%;transform:perspective(10000px) translate3d(0px,0.39px,0.01px) scaleX(0.9905);">SUM(Profit)</span>
<span class="t" style="left:380px;top:88px;font-size:9.86px;line-height:14px;color:#fff;transform-origin:0 50%;transform:perspective(10000px) translate3d(0.6px,0.99px,0.01px) scaleX(0.9699);">Sub-Category</span>
<span class="t" style="left:277px;top:116px;font-size:15.45px;line-height:22px;color:#767676;transform-origin:0 50%;transform:perspective(10000px) translate3d(0.6px,0.11px,0.01px) scaleX(1.0104);">Sum of profit for each sub-category</span>
<span class="t" style="left:279px;top:141px;font-size:8.4px;line-height:12px;color:#333;font-weight:bold;transform-origin:0 50%;transform:perspective(10000px) translate3d(0.8px,0.89px,0.01px) scaleX(1.0417);">Sub-Cat..</span>
<span class="t" style="left:304px;top:154px;font-size:9.46px;line-height:13px;color:#6e6e6e;transform-origin:100% 50%;transform:perspective(10000px) translate3d(0.6px,0.65px,0.01px) scaleX(0.9664);">Copiers</span>
<span class="t" style="left:305px;top:167px;font-size:9.46px;line-height:13px;color:#6e6e6e;transform-origin:100% 50%;transform:perspective(10000px) translate3d(0.12px,0.47px,0.01px) scaleX(0.9538);">Phones</span>
<span class="t" style="left:286px;top:180px;font-size:9.46px;line-height:13px;color:#6e6e6e;transform-origin:100% 50%;transform:perspective(10000px) translate3d(0.21px,0.29px,0.01px) scaleX(0.9648);">Accessories</span>
<span class="t" style="left:311px;top:193px;font-size:9.46px;line-height:13px;color:#6e6e6e;transform-origin:100% 50%;transform:perspective(10000px) translate3d(0.96px,0.1px,0.01px) scaleX(0.9666);">Paper</span>
<span class="t" style="left:305px;top:205px;font-size:9.46px;line-height:13px;color:#6e6e6e;transform-origin:100% 50%;transform:perspective(10000px) translate3d(0.13px,0.92px,0.01px) scaleX(1.0039);">Binders</span>
<span class="t" style="left:309px;top:218px;font-size:9.46px;line-height:13px;color:#6e6e6e;transform-origin:100% 50%;transform:perspective(10000px) translate3d(0.87px,0.73px,0.01px) scaleX(0.9731);">Chairs</span>
<span class="t" style="left:304px;top:231px;font-size:9.46px;line-height:13px;color:#6e6e6e;transform-origin:100% 50%;transform:perspective(10000px) translate3d(0.07px,0.55px,0.01px) scaleX(1.0111);">Storage</span>
<span class="t" style="left:290px;top:244px;font-size:9.46px;line-height:13px;color:#6e6e6e;transform-origin:100% 50%;transform:perspective(10000px) translate3d(0.92px,0.37px,0.01px) scaleX(0.9875);">Appliances</span>
<span class="t" style="left:288px;top:257px;font-size:9.46px;line-height:13px;color:#6e6e6e;transform-origin:100% 50%;transform:perspective(10000px) translate3d(0.31px,0.18px,0.01px) scaleX(1.0103);">Furnishings</span>
<span class="t" style="left:293px;top:269px;font-size:9.46px;line-height:13px;color:#6e6e6e;transform-origin:100% 50%;transform:perspective(10000px) translate3d(0.02px,1px,0.01px) scaleX(0.9689);">Envelopes</span>
<span class="t" style="left:325px;top:282px;font-size:9.46px;line-height:13px;color:#6e6e6e;transform-origin:100% 50%;transform:perspective(10000px) translate3d(0.11px,0.81px,0.01px) scaleX(1.1003);">Art</span>
<span class="t" style="left:309px;top:295px;font-size:9.46px;line-height:13px;color:#6e6e6e;transform-origin:100% 50%;transform:perspective(10000px) translate3d(0.33px,0.63px,0.01px) scaleX(0.9543);">Labels</span>
<span class="t" style="left:296px;top:308px;font-size:9.46px;line-height:13px;color:#6e6e6e;transform-origin:100% 50%;transform:perspective(10000px) translate3d(0.72px,0.45px,0.01px) scaleX(0.9856);">Machines</span>
<span class="t" style="left:295px;top:321px;font-size:9.46px;line-height:13px;color:#6e6e6e;transform-origin:100% 50%;transform:perspective(10000px) translate3d(0.14px,0.26px,0.01px) scaleX(0.9915);">Fasteners</span>
<span class="t" style="left:300px;top:334px;font-size:9.46px;line-height:13px;color:#6e6e6e;transform-origin:100% 50%;transform:perspective(10000px) translate3d(0.91px,0.08px,0.01px) scaleX(0.9893);">Supplies</span>
<span class="t" style="left:290px;top:346px;font-size:9.46px;line-height:13px;color:#6e6e6e;transform-origin:100% 50%;transform:perspective(10000px) translate3d(0.93px,0.89px,0.01px) scaleX(0.9574);">Bookcases</span>
<span class="t" style="left:309px;top:359px;font-size:9.46px;line-height:13px;color:#6e6e6e;transform-origin:100% 50%;transform:perspective(10000px) translate3d(0.86px,0.71px,0.01px) scaleX(0.9984);">Tables</span>
<span class="t" style="left:341px;top:376px;font-size:9.46px;line-height:13px;color:#6e6e6e;transform-origin:0 50%;transform:perspective(10000px) translate3d(0.5px,0.85px,0.01px) scaleX(1.0042);">-$20,000</span>
<span class="t" style="left:400px;top:376px;font-size:9.46px;line-height:13px;color:#6e6e6e;transform-origin:50% 50%;transform:perspective(10000px) translate3d(0.64px,0.75px,0.01px) scaleX(1.0069);">-$10,000</span>
<span class="t" style="left:483px;top:376px;font-size:9.46px;line-height:13px;color:#6e6e6e;transform-origin:50% 50%;transform:perspective(10000px) translate3d(0.24px,0.75px,0.01px) scaleX(0.9505);">$0</span>
<span class="t" style="left:540px;top:376px;font-size:9.46px;line-height:13px;color:#6e6e6e;transform-origin:50% 50%;transform:perspective(10000px) translate3d(0.59px,0.75px,0.01px) scaleX(1.0207);">$10,000</span>
<span class="t" style="left:609px;top:376px;font-size:9.46px;line-height:13px;color:#6e6e6e;transform-origin:50% 50%;transform:perspective(10000px) translate3d(0.78px,0.75px,0.01px) scaleX(1.0207);">$20,000</span>
<span class="t" style="left:678px;top:376px;font-size:9.46px;line-height:13px;color:#6e6e6e;transform-origin:50% 50%;transform:perspective(10000px) translate3d(0.97px,0.75px,0.01px) scaleX(1.0207);">$30,000</span>
<span class="t" style="left:748px;top:376px;font-size:9.46px;line-height:13px;color:#6e6e6e;transform-origin:50% 50%;transform:perspective(10000px) translate3d(0.16px,0.75px,0.01px) scaleX(1.0207);">$40,000</span>
<span class="t" style="left:817px;top:376px;font-size:9.46px;line-height:13px;color:#6e6e6e;transform-origin:50% 50%;transform:perspective(10000px) translate3d(0.35px,0.75px,0.01px) scaleX(1.0207);">$50,000</span>
<span class="t" style="left:607px;top:394px;font-size:9.03px;line-height:13px;color:#444;font-weight:bold;transform-origin:50% 50%;transform:perspective(10000px) translate3d(0.91px,0.31px,0.01px) scaleX(1.0265);">Profit</span>
<span class="t" style="left:913px;top:113px;font-size:9.87px;line-height:14px;color:#555;transform-origin:0 50%;transform:perspective(10000px) translate3d(0.6px,0.3px,0.01px) scaleX(0.9492);">Sub-Category (group)</span>
<span class="t" style="left:924px;top:129px;font-size:9.13px;line-height:13px;color:#555;transform-origin:0 50%;transform:perspective(10000px) translate3d(0.2px,0.44px,0.01px) scaleX(1.0142);">Accessories, Binders..</span>
<span class="t" style="left:924px;top:142px;font-size:9.13px;line-height:13px;color:#555;transform-origin:0 50%;transform:perspective(10000px) translate3d(0.2px,0.14px,0.01px) scaleX(1.0424);">Other</span>
</div>
</div>
</body>
</html>
